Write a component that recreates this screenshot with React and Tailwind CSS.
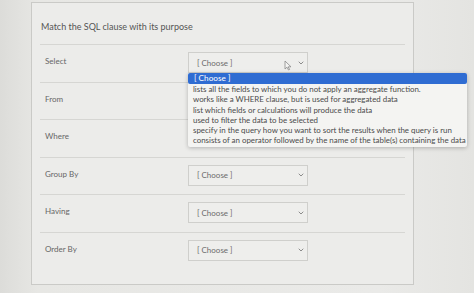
import { ChevronDown } from 'lucide-react'

const ROWS = [
  { label: 'Select', open: true },
  { label: 'From' },
  { label: 'Where' },
  { label: 'Group By', select: true },
  { label: 'Having', select: true },
  { label: 'Order By', select: true },
]

const OPTIONS = [
  'lists all the fields to which you do not apply an aggregate function.',
  'works like a WHERE clause, but is used for aggregated data',
  'list which fields or calculations will produce the data',
  'used to filter the data to be selected',
  'specify in the query how you want to sort the results when the query is run',
  'consists of an operator followed by the name of the table(s) containing the data',
]

function Select({ open }) {
  return (
    <div className="relative">
      <div className="flex h-[21px] w-[120px] items-center justify-between border border-[#cfcfcc] bg-[#eeeeec] pl-[8px] pr-[2px] text-[8px] text-[#6b6b6b]">
        <span>[ Choose ]</span>
        <ChevronDown size={8} strokeWidth={2.5} className="text-[#777]" />
      </div>

      {open && (
        <>
          {/* mouse pointer */}
          <svg className="absolute left-[96px] top-[8px]" width="8" height="11" viewBox="0 0 8 11">
            <path d="M1 1 L1 9 L3 7.2 L4.5 10 L5.6 9.5 L4.2 6.8 L7 6.8 Z" fill="#f4f4f2" stroke="#8a8a8a" strokeWidth="0.8" strokeLinejoin="round" />
          </svg>

          {/* open list */}
          <div className="absolute left-0 top-[21px] z-10 w-[279px] rounded-[2px] bg-[#f4f4f2] pb-[1px] text-[7.9px] leading-[10.3px] text-[#4a4a4a] shadow-[0_1px_4px_rgba(0,0,0,0.25)]">
            <div className="rounded-[2px] bg-[#2f6cd2] px-[6px] text-[8.2px] leading-[11px] text-white">[ Choose ]</div>
            {OPTIONS.map((o) => (
              <div key={o} className="whitespace-nowrap px-[5px]">{o}</div>
            ))}
          </div>
        </>
      )}
    </div>
  )
}

export default function App() {
  return (
    <div className="h-[293px] w-[474px] overflow-hidden bg-[linear-gradient(to_right,#dcdcd9,#e7e7e4_8%,#eaeae8_80%,#e4e4e1)] pl-[31px] pt-[2px] font-['Lato',sans-serif]">
      <div className="h-[283px] w-[383px] border border-[#cacac7] bg-[#ececea] px-[8px]">
        <div className="h-[42px] border-b border-[#d6d6d3] pl-[1px] pt-[17px] text-[9px] text-[#555]">
          Match the SQL clause with its purpose
        </div>

        {ROWS.map((r, i) => (
          <div
            key={r.label}
            className={`flex h-[37.6px] items-start pt-[7px] ${i < ROWS.length - 1 ? 'border-b border-[#d6d6d3]' : ''}`}
          >
            <div className="w-[148px] pl-[5px] pt-[3px] text-[8px] text-[#666]">{r.label}</div>
            {(r.open || r.select) && <Select open={r.open} />}
          </div>
        ))}
      </div>
    </div>
  )
}
